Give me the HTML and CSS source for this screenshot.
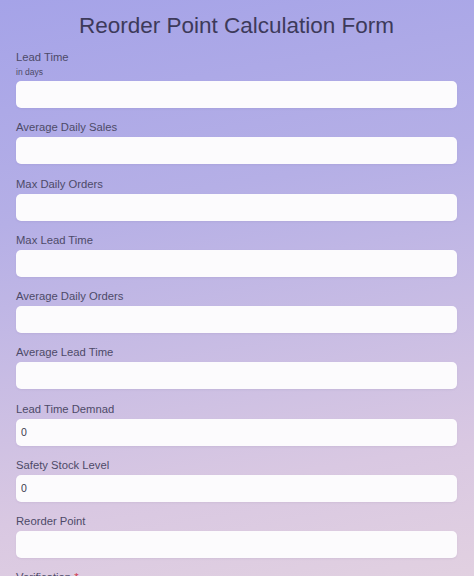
FILE: index.html
```html
<!DOCTYPE html>
<html lang="en">
<head>
  <meta charset="UTF-8">
  <meta name="viewport" content="width=device-width, initial-scale=1.0">
  <title>Reorder Point Calculation Form</title>
  <link rel="stylesheet" href="styles.css">
</head>
<body>
  <div class="container">
    <h1>Reorder Point Calculation Form</h1>

    <div class="field">
      <label for="leadTime">Lead Time</label>
      <span class="sublabel">in days</span>
      <input type="text" id="leadTime">
    </div>

    <div class="field">
      <label for="avgDailySales">Average Daily Sales</label>
      <input type="text" id="avgDailySales">
    </div>

    <div class="field">
      <label for="maxDailyOrders">Max Daily Orders</label>
      <input type="text" id="maxDailyOrders">
    </div>

    <div class="field">
      <label for="maxLeadTime">Max Lead Time</label>
      <input type="text" id="maxLeadTime">
    </div>

    <div class="field">
      <label for="avgDailyOrders">Average Daily Orders</label>
      <input type="text" id="avgDailyOrders">
    </div>

    <div class="field">
      <label for="avgLeadTime">Average Lead Time</label>
      <input type="text" id="avgLeadTime">
    </div>

    <div class="field">
      <label for="leadTimeDemand">Lead Time Demnad</label>
      <input type="text" id="leadTimeDemand" value="0" readonly>
    </div>

    <div class="field">
      <label for="safetyStock">Safety Stock Level</label>
      <input type="text" id="safetyStock" value="0" readonly>
    </div>

    <div class="field">
      <label for="reorderPoint">Reorder Point</label>
      <input type="text" id="reorderPoint" readonly>
    </div>

    <div class="field">
      <label for="verification">Verification <span class="required">*</span></label>
      <input type="text" id="verification">
    </div>
  </div>
</body>
</html>
```

FILE: styles.css
```css
body {
  font-family: "Liberation Sans", Arial, sans-serif;
  margin: 0;
  padding: 0;
  min-height: 100vh;
  background: linear-gradient(170deg, #a5a3e8 0%, #b5afe6 30%, #d9c8e2 70%, #e7d6e0 100%);
  color: #4d4a68;
}

.container {
  padding: 0 17px 40px 16px;
}

h1 {
  margin: 8px 0 5px;
  font-size: 22.5px;
  line-height: 36px;
  font-weight: normal;
  text-align: center;
  color: #3d3a5a;
}

.field {
  display: flex;
  flex-direction: column;
  margin-bottom: 11.25px;
}

.field label {
  font-size: 11.25px;
  line-height: 16px;
  margin-bottom: 2px;
}

.sublabel {
  font-size: 8.5px;
  line-height: 12px;
  margin-top: -1px;
  margin-bottom: 3px;
}

.required {
  color: #d0364a;
}

.field input {
  height: 27px;
  box-sizing: border-box;
  border: none;
  border-radius: 5px;
  padding: 0 5px;
  background-color: #fcfbfd;
  font-family: inherit;
  font-size: 10.5px;
  color: #3d3a4f;
  box-shadow: 0 1px 2px rgba(80, 60, 120, 0.08);
  outline: none;
}
```
